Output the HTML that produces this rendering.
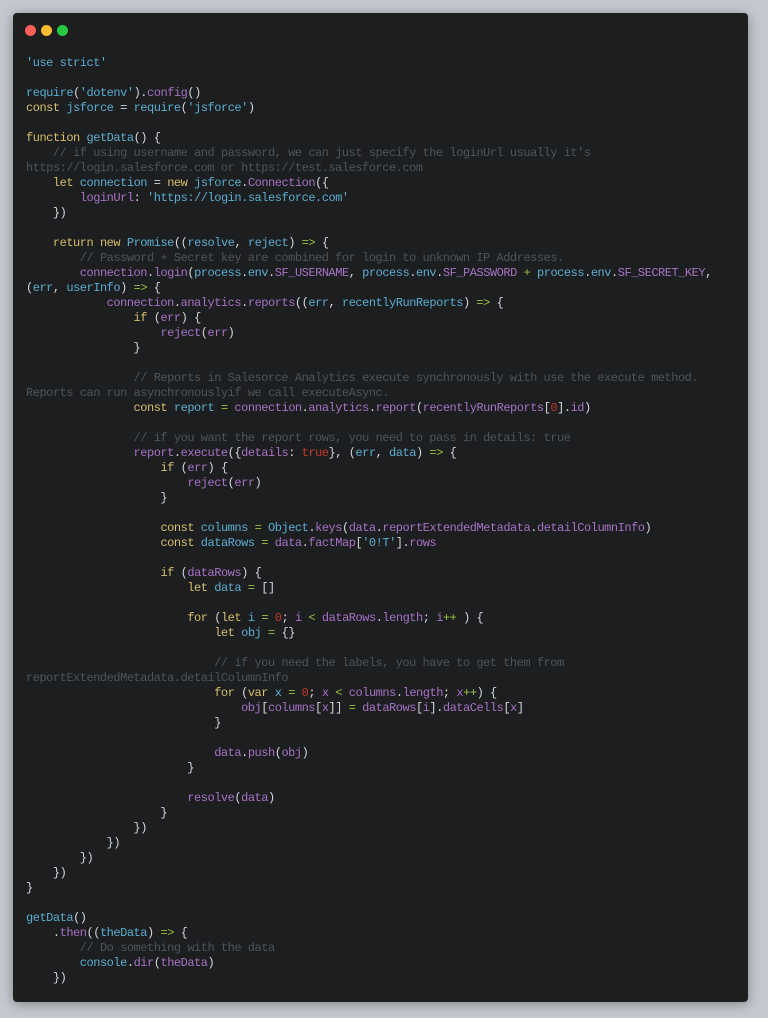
<!DOCTYPE html>
<html><head><meta charset="utf-8"><style>
html,body{margin:0;padding:0;width:768px;height:1018px;background:#c3c9cf;overflow:hidden}
.card{position:absolute;left:13px;top:13px;width:735px;height:989px;background:#1d1e20;border-radius:4px;box-shadow:0 2px 12px rgba(0,0,0,.35)}
.dot{position:absolute;top:25px;width:11px;height:11px;border-radius:50%}
pre{position:absolute;left:26px;top:56px;margin:0;font-family:"Liberation Mono",monospace;font-size:12px;letter-spacing:-0.48px;line-height:15px;color:#d3d6da;white-space:pre}
.k{color:#d6bf6a}.b{color:#5aaed0}.p{color:#a672c4}.c{color:#4d545c}.g{color:#9bc53d}.r{color:#c0392b}
</style></head><body>
<div class="card"></div>
<div class="dot" style="left:25px;background:#fe5f57"></div>
<div class="dot" style="left:41px;background:#febc2e"></div>
<div class="dot" style="left:57px;background:#28c840"></div>
<pre><span class="b">'use strict'</span>

<span class="b">require</span>(<span class="b">'dotenv'</span>).<span class="p">config</span>()
<span class="k">const</span> <span class="b">jsforce</span> = <span class="b">require</span>(<span class="b">'jsforce'</span>)

<span class="k">function</span> <span class="b">getData</span>() {
    <span class="c">// if using username and password, we can just specify the loginUrl usually it's</span>
<span class="c">https://login.salesforce.com or https://test.salesforce.com</span>
    <span class="k">let</span> <span class="b">connection</span> = <span class="k">new</span> <span class="b">jsforce</span>.<span class="p">Connection</span>({
        <span class="p">loginUrl</span>: <span class="b">'https://login.salesforce.com'</span>
    })

    <span class="k">return</span> <span class="k">new</span> <span class="b">Promise</span>((<span class="b">resolve</span>, <span class="b">reject</span>) <span class="g">=&gt;</span> {
        <span class="c">// Password + Secret key are combined for login to unknown IP Addresses.</span>
        <span class="p">connection</span>.<span class="p">login</span>(<span class="b">process</span>.<span class="b">env</span>.<span class="p">SF_USERNAME</span>, <span class="b">process</span>.<span class="b">env</span>.<span class="p">SF_PASSWORD</span> <span class="g">+</span> <span class="b">process</span>.<span class="b">env</span>.<span class="p">SF_SECRET_KEY</span>,
(<span class="b">err</span>, <span class="b">userInfo</span>) <span class="g">=&gt;</span> {
            <span class="p">connection</span>.<span class="p">analytics</span>.<span class="p">reports</span>((<span class="b">err</span>, <span class="b">recentlyRunReports</span>) <span class="g">=&gt;</span> {
                <span class="k">if</span> (<span class="p">err</span>) {
                    <span class="p">reject</span>(<span class="p">err</span>)
                }

                <span class="c">// Reports in Salesorce Analytics execute synchronously with use the execute method.</span>
<span class="c">Reports can run asynchronouslyif we call executeAsync.</span>
                <span class="k">const</span> <span class="b">report</span> <span class="g">=</span> <span class="p">connection</span>.<span class="p">analytics</span>.<span class="p">report</span>(<span class="p">recentlyRunReports</span>[<span class="r">0</span>].<span class="p">id</span>)

                <span class="c">// if you want the report rows, you need to pass in details: true</span>
                <span class="p">report</span>.<span class="p">execute</span>({<span class="p">details</span>: <span class="r">true</span>}, (<span class="b">err</span>, <span class="b">data</span>) <span class="g">=&gt;</span> {
                    <span class="k">if</span> (<span class="p">err</span>) {
                        <span class="p">reject</span>(<span class="p">err</span>)
                    }

                    <span class="k">const</span> <span class="b">columns</span> <span class="g">=</span> <span class="b">Object</span>.<span class="p">keys</span>(<span class="p">data</span>.<span class="p">reportExtendedMetadata</span>.<span class="p">detailColumnInfo</span>)
                    <span class="k">const</span> <span class="b">dataRows</span> <span class="g">=</span> <span class="p">data</span>.<span class="p">factMap</span>[<span class="b">'0!T'</span>].<span class="p">rows</span>

                    <span class="k">if</span> (<span class="p">dataRows</span>) {
                        <span class="k">let</span> <span class="b">data</span> <span class="g">=</span> []

                        <span class="k">for</span> (<span class="k">let</span> <span class="b">i</span> <span class="g">=</span> <span class="r">0</span>; <span class="p">i</span> <span class="g">&lt;</span> <span class="p">dataRows</span>.<span class="p">length</span>; <span class="p">i</span><span class="g">++</span> ) {
                            <span class="k">let</span> <span class="b">obj</span> <span class="g">=</span> {}

                            <span class="c">// if you need the labels, you have to get them from</span>
<span class="c">reportExtendedMetadata.detailColumnInfo</span>
                            <span class="k">for</span> (<span class="k">var</span> <span class="b">x</span> <span class="g">=</span> <span class="r">0</span>; <span class="p">x</span> <span class="g">&lt;</span> <span class="p">columns</span>.<span class="p">length</span>; <span class="p">x</span><span class="g">++</span>) {
                                <span class="p">obj</span>[<span class="p">columns</span>[<span class="p">x</span>]] <span class="g">=</span> <span class="p">dataRows</span>[<span class="p">i</span>].<span class="p">dataCells</span>[<span class="p">x</span>]
                            }

                            <span class="p">data</span>.<span class="p">push</span>(<span class="p">obj</span>)
                        }

                        <span class="p">resolve</span>(<span class="p">data</span>)
                    }
                })
            })
        })
    })
}

<span class="b">getData</span>()
    .<span class="p">then</span>((<span class="b">theData</span>) <span class="g">=&gt;</span> {
        <span class="c">// Do something with the data</span>
        <span class="b">console</span>.<span class="p">dir</span>(<span class="p">theData</span>)
    })</pre>
</body></html>
